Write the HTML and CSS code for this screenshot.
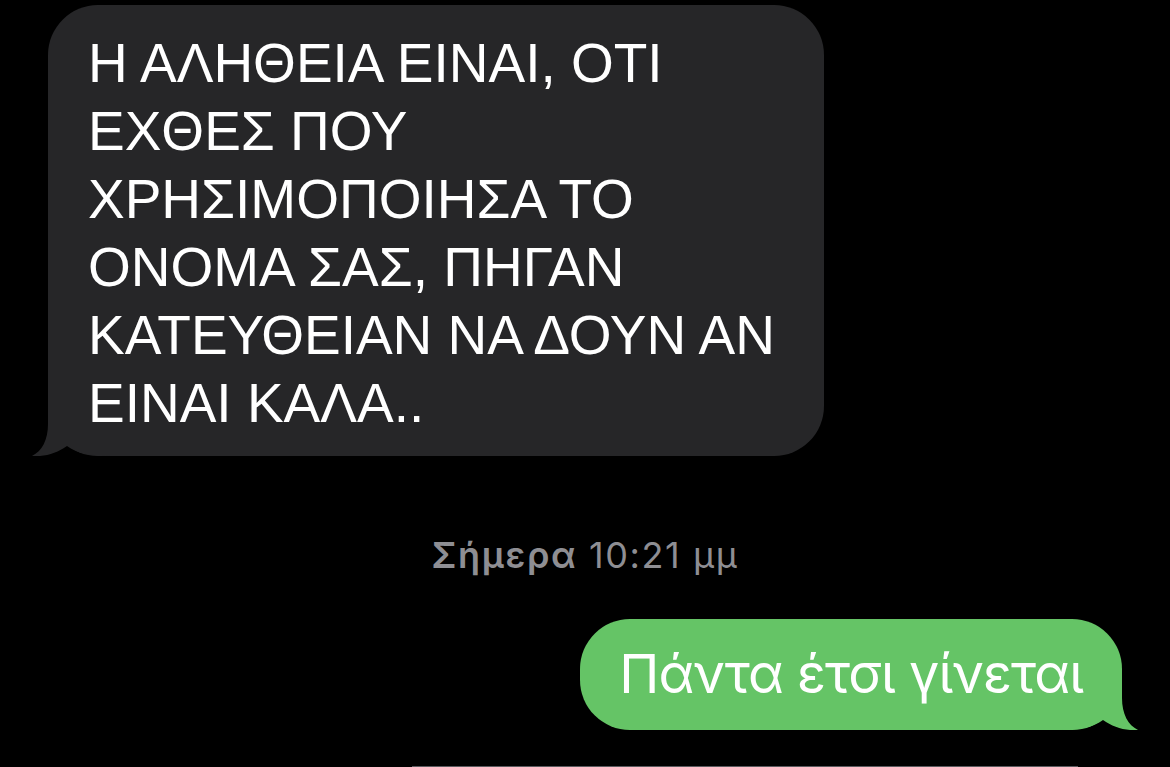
FILE: index.html
```html
<!DOCTYPE html>
<html lang="el">
<head>
<meta charset="utf-8">
<title>Messages</title>
<link rel="stylesheet" href="styles.css">
</head>
<body>
<div class="thread">
  <div class="row row-in">
    <div class="bubble bubble-in">
      <p class="msg">Η ΑΛΗΘΕΙΑ ΕΙΝΑΙ, ΟΤΙ<br>ΕΧΘΕΣ ΠΟΥ<br>ΧΡΗΣΙΜΟΠΟΙΗΣΑ ΤΟ<br>ΟΝΟΜΑ ΣΑΣ, ΠΗΓΑΝ<br>ΚΑΤΕΥΘΕΙΑΝ ΝΑ ΔΟΥΝ ΑΝ<br>ΕΙΝΑΙ ΚΑΛΑ..</p>
      <svg class="tail tail-in" viewBox="0 0 84 50" width="84" height="50" aria-hidden="true">
        <path d="M16 0 L16 18 C16 34 10 45 0 50 C13 51 25 47 35 40 C45 47 56 50 84 50 L84 0 Z" fill="#262628"/>
      </svg>
    </div>
  </div>
  <div class="stamp"><span class="stamp-day">Σήμερα</span> 10:21 μμ</div>
  <div class="row row-out">
    <div class="bubble bubble-out">
      <p class="msg msg-out">Πάντα έτσι γίνεται</p>
      <svg class="tail tail-out" viewBox="0 0 84 50" width="84" height="50" aria-hidden="true">
        <path d="M68 0 L68 18 C68 34 74 45 84 50 C71 51 59 47 49 40 C39 47 28 50 0 50 L0 0 Z" fill="#65c466"/>
      </svg>
    </div>
  </div>
  <div class="composer-edge"></div>
</div>
</body>
</html>
```

FILE: styles.css
```css
html, body {
  margin: 0;
  padding: 0;
  background: #000;
}

body {
  width: 1170px;
  height: 767px;
  overflow: hidden;
  font-family: "Liberation Sans", Arial, sans-serif;
}

.thread {
  display: flex;
  flex-direction: column;
  height: 767px;
}

.row {
  display: flex;
}

.row-in {
  justify-content: flex-start;
  padding-left: 48px;
  padding-top: 5px;
}

.row-out {
  justify-content: flex-end;
  padding-right: 48px;
  margin-top: 43px;
}

.bubble {
  position: relative;
  border-radius: 50px;
}

.bubble-in {
  background: #262628;
  width: 696px;
  padding: 24px 40px 19px 40px;
}

.bubble-out {
  background: #65c466;
  height: 111px;
  box-sizing: border-box;
  padding: 21px 39px 0 39px;
}

.msg {
  margin: 0;
  color: #fff;
  font-size: 55px;
  line-height: 68px;
  white-space: nowrap;
  position: relative;
  z-index: 1;
}

.msg-out {
  font-family: Inter, "Liberation Sans", sans-serif;
  font-size: 54px;
  letter-spacing: -1px;
}

.tail {
  position: absolute;
  bottom: 0;
  display: block;
}

.tail-in {
  left: -16px;
}

.tail-out {
  right: -16px;
}

.stamp {
  margin-top: 78px;
  text-align: center;
  color: #8e8e93;
  font-family: Inter, "Liberation Sans", sans-serif;
  font-size: 36px;
  line-height: 42px;
  letter-spacing: 1.6px;
}

.stamp-day {
  font-weight: 600;
}

.composer-edge {
  margin-top: auto;
  margin-left: 412px;
  width: 666px;
  height: 1px;
  background: #5a5a5e;
}
```
